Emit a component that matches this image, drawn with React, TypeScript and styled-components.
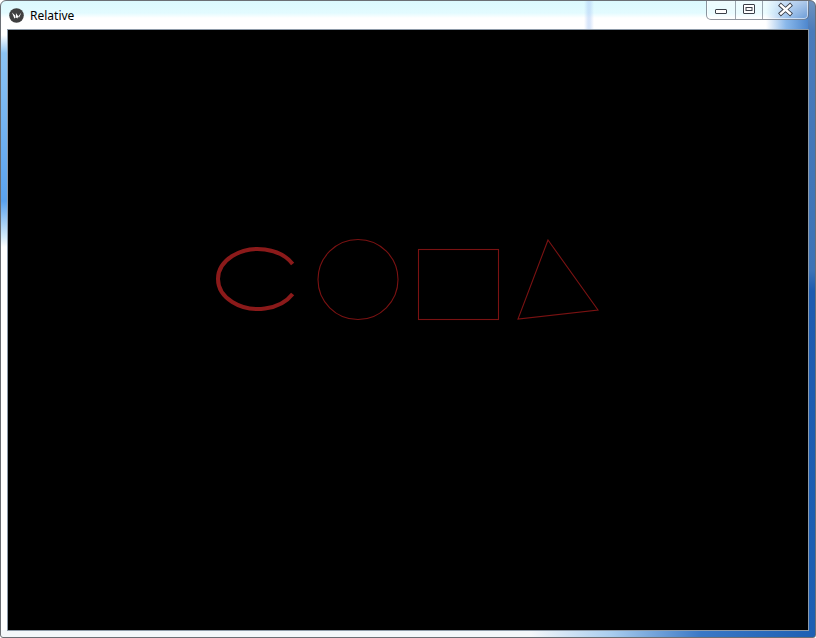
import React from 'react'
import styled, { createGlobalStyle } from 'styled-components'

const GlobalStyle = createGlobalStyle`
  html, body {
    margin: 0;
    padding: 0;
    background: #ffffff;
  }
  body {
    font-family: "Noto Sans", "Liberation Sans", sans-serif;
  }
`

const Window = styled.div`
  box-sizing: border-box;
  width: 816px;
  height: 638px;
  display: flex;
  flex-direction: column;
  padding: 0 6px 6px 6px;
  border: 1px solid #6b6f75;
  border-radius: 6px 6px 3px 3px;
  overflow: hidden;
  background:
    linear-gradient(180deg, rgba(255,255,255,0) 34px, #8cc4f4 52px, #5aa2ee 200px, #d4ebfa 236px, rgba(255,255,255,0) 246px) left top / 6px 100% no-repeat,
    linear-gradient(90deg, #f3f7fa 0, #f3f7fa 530px, #a9cdee 610px, #3a78c6 700px, #1d5fb3 100%) left bottom / 100% 7px no-repeat,
    linear-gradient(180deg, #6e93bf 0, #4a7bbb 30px, #3d73b6 270px, #1c5bb0 290px, #1d5fb3 100%) right top / 7px 100% no-repeat,
    linear-gradient(90deg, rgba(255,255,255,0) 0, rgba(255,255,255,0) 583px, rgba(170,200,245,.45) 587px, rgba(170,200,245,.45) 589px, rgba(255,255,255,0) 593px, rgba(255,255,255,0) 765px, #8ab8ea 785px, #3b78c5 814px) left top / 100% 29px no-repeat,
    linear-gradient(180deg, #dbf9fe 0, #e3fbff 12px, #ffffff 17px, #ffffff 100%);
`

const TitleBar = styled.div`
  height: 28px;
  display: flex;
  align-items: center;
  padding-left: 2px;
  gap: 6px;
`

const AppIcon = styled.svg`
  width: 15px;
  height: 15px;
  flex: none;
`

const Title = styled.span`
  font-family: "Noto Sans", "Liberation Sans", sans-serif;
  font-size: 12px;
  color: #000;
  line-height: 1;
  margin-top: 1px;
`

const Controls = styled.div`
  margin-left: auto;
  align-self: flex-start;
  margin-top: -1px;
  height: 19px;
  display: flex;
  border: 1px solid rgba(70, 80, 96, 0.6);
  border-top: none;
  border-radius: 0 0 5px 5px;
  background: linear-gradient(180deg, rgba(255,255,255,0.55), rgba(255,255,255,0.15));
  box-shadow: inset 0 0 0 1px rgba(255,255,255,0.55);
  overflow: hidden;
`

const ControlButton = styled.div<{ $w: number; $first?: boolean }>`
  width: ${p => p.$w}px;
  height: 100%;
  display: flex;
  align-items: flex-start;
  justify-content: center;
  border-left: ${p => (p.$first ? 'none' : '1px solid rgba(70, 80, 96, 0.5)')};
  box-sizing: border-box;
`

const Glyph = styled.svg<{ $top: number }>`
  margin-top: ${p => p.$top}px;
  overflow: visible;
`

const Client = styled.div`
  width: 800px;
  height: 600px;
  border: 1px solid #8d9aa8;
  background: #000;
`

const Scene = styled.svg`
  display: block;
  width: 800px;
  height: 600px;
`

const RED = '#8b1a1a'
const THIN = '#7a1212'

const App: React.FC = () => {
  const c30 = Math.cos(Math.PI / 6) * 40
  return (
    <>
      <GlobalStyle />
      <Window>
        <TitleBar>
          <AppIcon viewBox="0 0 15 15">
            <circle cx="7.5" cy="7.5" r="7.3" fill="#3f3f3f" />
            <path d="M3 4.6 L6.2 7.4 L6.6 9.8 L5.4 10.4 Z M6.9 5 L9.2 8.2 L8.4 10.6 L7 9.6 Z M12.4 4.6 L10 9.8 L9.2 8.4 Z" fill="#fff" />
          </AppIcon>
          <Title>Relative</Title>
          <Controls>
            <ControlButton $w={28} $first>
              <Glyph $top={9} width="12" height="5" viewBox="0 0 12 5">
                <rect x="0.5" y="0.5" width="11" height="4" rx="0.5" fill="#fff" stroke="#3b4049" />
              </Glyph>
            </ControlButton>
            <ControlButton $w={27}>
              <Glyph $top={4} width="12" height="10" viewBox="0 0 12 10">
                <rect x="0.5" y="0.5" width="11" height="9" rx="0.5" fill="#fff" stroke="#3b4049" />
                <rect x="3" y="3.5" width="6" height="3" fill="none" stroke="#3b4049" />
              </Glyph>
            </ControlButton>
            <ControlButton $w={46}>
              <Glyph $top={4} width="13" height="11" viewBox="0 0 13 11">
                <path d="M2 1.5 L11 9.5 M11 1.5 L2 9.5" stroke="#3b4049" strokeWidth="4.2" strokeLinecap="square" />
                <path d="M2 1.5 L11 9.5 M11 1.5 L2 9.5" stroke="#fff" strokeWidth="2.4" strokeLinecap="square" />
              </Glyph>
            </ControlButton>
          </Controls>
        </TitleBar>
        <Client>
          <Scene viewBox="0 0 800 600">
            <path
              d={`M ${250 + c30} 234 A 40 30 0 1 0 ${250 + c30} 264`}
              fill="none"
              stroke={RED}
              strokeWidth="4"
            />
            <circle cx="350" cy="249.5" r="40" fill="none" stroke={THIN} strokeWidth="1.1" />
            <rect x="410.5" y="219.5" width="80" height="70" fill="none" stroke={THIN} strokeWidth="1.1" />
            <polygon points="540,210 590,280 510,289" fill="none" stroke={THIN} strokeWidth="1.1" />
          </Scene>
        </Client>
      </Window>
    </>
  )
}

export default App
